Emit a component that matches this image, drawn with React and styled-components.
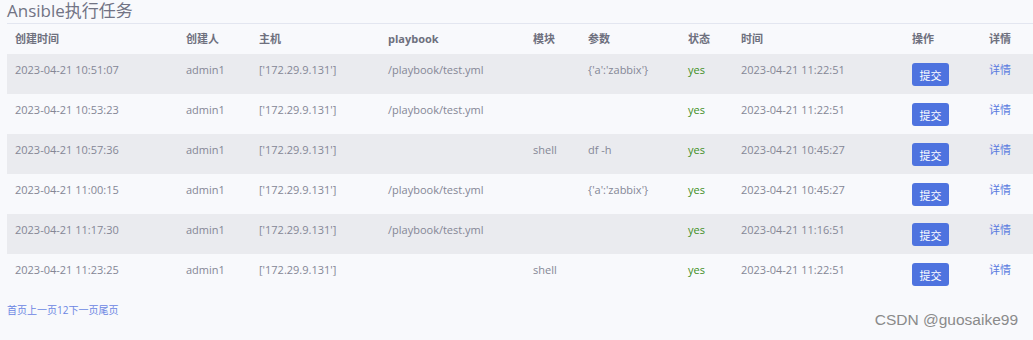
import styled, { createGlobalStyle } from 'styled-components';

const GlobalStyle = createGlobalStyle`
  html, body {
    margin: 0;
    padding: 0;
    background: #f8f9fc;
  }
  body {
    font-family: "Open Sans", "Noto Sans CJK SC", sans-serif;
    overflow: hidden;
  }
`;

// 列宽与表头
const columns = [
  { key: 'created', title: '创建时间', width: 171 },
  { key: 'user', title: '创建人', width: 73 },
  { key: 'host', title: '主机', width: 129 },
  { key: 'playbook', title: 'playbook', width: 145 },
  { key: 'module', title: '模块', width: 55 },
  { key: 'args', title: '参数', width: 100 },
  { key: 'status', title: '状态', width: 53 },
  { key: 'time', title: '时间', width: 171 },
  { key: 'op', title: '操作', width: 77 },
  { key: 'detail', title: '详情', width: 60 },
];

const rows = [
  { created: '2023-04-21 10:51:07', host: "['172.29.9.131']", playbook: '/playbook/test.yml', module: '', args: "{'a':'zabbix'}", time: '2023-04-21 11:22:51' },
  { created: '2023-04-21 10:53:23', host: "['172.29.9.131']", playbook: '/playbook/test.yml', module: '', args: '', time: '2023-04-21 11:22:51' },
  { created: '2023-04-21 10:57:36', host: "['172.29.9.131']", playbook: '', module: 'shell', args: 'df -h', time: '2023-04-21 10:45:27' },
  { created: '2023-04-21 11:00:15', host: "['172.29.9.131']", playbook: '/playbook/test.yml', module: '', args: "{'a':'zabbix'}", time: '2023-04-21 10:45:27' },
  { created: '2023-04-21 11:17:30', host: "['172.29.9.131']", playbook: '/playbook/test.yml', module: '', args: '', time: '2023-04-21 11:16:51' },
  { created: '2023-04-21 11:23:25', host: "['172.29.9.131']", playbook: '', module: 'shell', args: '', time: '2023-04-21 11:22:51' },
];

export default function App() {
  return (
    <Page>
      <GlobalStyle />
      <Title>Ansible执行任务</Title>
      <Table>
        <colgroup>
          {columns.map((c) => (
            <col key={c.key} style={{ width: c.width }} />
          ))}
        </colgroup>
        <thead>
          <tr>
            {columns.map((c) => (
              <Th key={c.key}>{c.title}</Th>
            ))}
          </tr>
        </thead>
        <tbody>
          {rows.map((r, i) => (
            <Row key={i} $striped={i % 2 === 0}>
              <Td>{r.created}</Td>
              <Td>admin1</Td>
              <Td>{r.host}</Td>
              <Td>{r.playbook}</Td>
              <Td>{r.module}</Td>
              <Td>{r.args}</Td>
              <Td><Status>yes</Status></Td>
              <Td>{r.time}</Td>
              <Td><SubmitBtn>提交</SubmitBtn></Td>
              <Td><DetailLink>详情</DetailLink></Td>
            </Row>
          ))}
        </tbody>
      </Table>
      <Pager>首页上一页12下一页尾页</Pager>
      <Watermark>CSDN @guosaike99</Watermark>
    </Page>
  );
}

const Page = styled.div`
  position: relative;
  width: 1033px;
  height: 340px;
  padding-left: 7px;
  box-sizing: border-box;
  overflow: hidden;
`;

const Title = styled.h1`
  margin: 0;
  padding: 2px 0 0;
  height: 23px;
  box-sizing: border-box;
  font-size: 17px;
  line-height: 18px;
  font-weight: 400;
  color: #717384;
`;

const Table = styled.table`
  width: 1034px;
  table-layout: fixed;
  border-collapse: collapse;
  border-top: 1px solid #e3e6f0;
  font-size: 11px;
`;

const Th = styled.th`
  height: 30px;
  padding: 7px 8px 7px;
  box-sizing: border-box;
  text-align: left;
  vertical-align: top;
  font-weight: 700;
  color: #6e707e;
  line-height: 16px;
  white-space: nowrap;
`;

const Row = styled.tr`
  background: ${({ $striped }) => ($striped ? '#eaebef' : '#f8f9fc')};
`;

const Td = styled.td`
  height: 40px;
  padding: 8px 8px 8px;
  box-sizing: border-box;
  vertical-align: top;
  color: #858796;
  line-height: 16px;
  white-space: nowrap;
`;

const Status = styled.span`
  color: #3f8f1f;
`;

const SubmitBtn = styled.button`
  display: block;
  width: 37px;
  height: 23px;
  margin-top: 1px;
  padding: 0;
  border: none;
  border-radius: 3px;
  background: #4e73df;
  color: #fff;
  font-family: "Noto Sans CJK SC", sans-serif;
  font-size: 11px;
  cursor: pointer;
`;

const DetailLink = styled.a`
  color: #5a7be0;
  text-decoration: none;
  cursor: pointer;
`;

const Pager = styled.div`
  margin-top: 9px;
  font-size: 10px;
  line-height: 14px;
  color: #6b86e3;
`;

const Watermark = styled.div`
  position: absolute;
  right: 15px;
  bottom: 11px;
  font-family: "Liberation Sans", Arial, sans-serif;
  font-size: 15.5px;
  color: #8a8a8a;
`;
